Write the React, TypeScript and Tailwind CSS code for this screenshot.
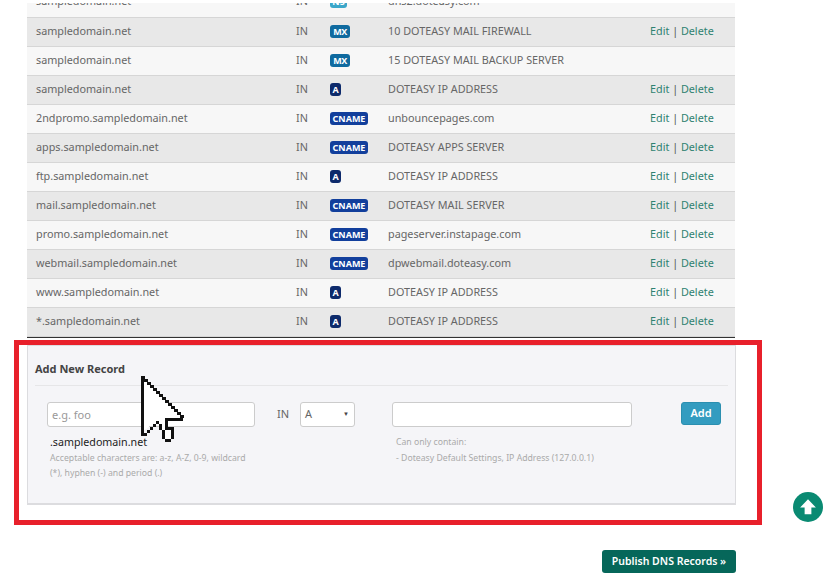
const font = "font-['Noto_Sans','Open_Sans',sans-serif]";

type DnsRow = { host: string; type: "NS" | "MX" | "A" | "CNAME"; value: string; actions?: boolean };

const rows: DnsRow[] = [
  { host: "sampledomain.net", type: "MX", value: "10 DOTEASY MAIL FIREWALL", actions: true },
  { host: "sampledomain.net", type: "MX", value: "15 DOTEASY MAIL BACKUP SERVER" },
  { host: "sampledomain.net", type: "A", value: "DOTEASY IP ADDRESS", actions: true },
  { host: "2ndpromo.sampledomain.net", type: "CNAME", value: "unbouncepages.com", actions: true },
  { host: "apps.sampledomain.net", type: "CNAME", value: "DOTEASY APPS SERVER", actions: true },
  { host: "ftp.sampledomain.net", type: "A", value: "DOTEASY IP ADDRESS", actions: true },
  { host: "mail.sampledomain.net", type: "CNAME", value: "DOTEASY MAIL SERVER", actions: true },
  { host: "promo.sampledomain.net", type: "CNAME", value: "pageserver.instapage.com", actions: true },
  { host: "webmail.sampledomain.net", type: "CNAME", value: "dpwebmail.doteasy.com", actions: true },
  { host: "www.sampledomain.net", type: "A", value: "DOTEASY IP ADDRESS", actions: true },
  { host: "*.sampledomain.net", type: "A", value: "DOTEASY IP ADDRESS", actions: true },
];

const Badge = ({ type }: { type: DnsRow["type"] }) => {
  if (type === "MX") {
    return <span className="w-[20px] rounded-[3px] bg-[#0f6a9f] text-center text-[9px] leading-[13px] font-bold tracking-[-0.5px] text-white">MX</span>;
  }
  if (type === "A") {
    return <span className="w-[11px] rounded-[3px] bg-[#0d2a6b] text-center text-[9px] leading-[13px] font-bold text-white">A</span>;
  }
  if (type === "NS") {
    return <span className="w-[17px] rounded-[3px] bg-[#3aa6c9] text-center text-[9px] leading-[13px] font-bold text-white">NS</span>;
  }
  return <span className="w-[38px] rounded-[3px] bg-[#123f9c] text-center text-[9px] leading-[13px] font-bold text-white">CNAME</span>;
};

const Row = ({ row, even }: { row: DnsRow; even: boolean }) => (
  <div
    className={`grid h-[29px] grid-cols-[260px_34px_58px_262px_85px] items-center border-b border-[#d6d6d6] pb-[2px] pl-[9px] text-[10.8px] text-[#666] ${
      even ? "bg-[#e8e8e8]" : "bg-[#f7f7f7]"
    }`}
  >
    <span>{row.host}</span>
    <span>IN</span>
    <span className="flex"><Badge type={row.type} /></span>
    <span>{row.value}</span>
    <span className="text-[#2f8271]">
      {row.actions && (
        <>
          Edit <span className="text-[#555]">|</span> Delete
        </>
      )}
    </span>
  </div>
);

// 3px pixel blocks of the big arrow cursor, from the tip
const cursorPixels: [number, number][] = [
  ...Array.from({ length: 20 }, (_, i): [number, number] => [0, i]),
  ...Array.from({ length: 13 }, (_, i): [number, number] => [i + 1, i + 1]),
  ...[8, 9, 10, 11, 12, 13].map((c): [number, number] => [c, 14]),
  [8, 15], [8, 16], [8, 17], [9, 17], [10, 17], [10, 18], [10, 19], [10, 20],
  [8, 21], [9, 21], [7, 18], [7, 19], [7, 20],
  [6, 16], [6, 17], [5, 15], [4, 16], [3, 17], [2, 18], [1, 19],
];

const BigCursor = () => (
  <svg className="absolute top-[376px] left-[141px]" width="45" height="66" viewBox="0 0 45 66" shapeRendering="crispEdges">
    <path d="M0 0 L42 42 L27 42 L27 51 L33 51 L33 63 L24 63 L21 54 L15 45 L0 57 Z" fill="#fff" />
    {cursorPixels.map(([x, y], i) => (
      <rect key={i} x={x * 3} y={y * 3} width={x === y ? 4 : 3} height="3" fill="#111" />
    ))}
  </svg>
);

const App = () => {
  return (
    <div className={`relative h-[582px] w-[838px] overflow-hidden bg-white pt-[3px] ${font}`}>
      <div className="ml-[27px] w-[708px]">
        <div className="h-[15px] overflow-hidden border-b border-[#d6d6d6] bg-[#f7f7f7]">
          <div className="-mt-[16px] grid h-[29px] grid-cols-[260px_34px_58px_262px_85px] items-center pl-[9px] text-[10.8px] text-[#666]">
            <span>sampledomain.net</span>
            <span>IN</span>
            <span className="flex"><Badge type="NS" /></span>
            <span>dns2.doteasy.com</span>
          </div>
        </div>
        {rows.map((row, idx) => (
          <Row key={idx} row={row} even={idx % 2 === 0} />
        ))}
        <div className="h-px bg-[#333]" />
      </div>

      <div className="mt-[7px] ml-[27px] h-[160px] w-[709px] border border-b-2 border-[#dcdcdf] bg-[#f5f5f8] px-[7px]">
        <h3 className="mt-[14px] h-[26px] border-b border-[#e6e6e8] text-[11px] leading-[17px] font-bold text-[#444]">Add New Record</h3>
        <div className="mt-[16px] flex items-start text-[11px] text-[#666]">
          <div className="ml-[12px] w-[208px]">
            <input
              placeholder="e.g. foo"
              className="h-[25px] w-full rounded-[3px] border border-[#ccc] bg-white px-[4px] text-[11px] placeholder:text-[#999]"
            />
            <p className="mt-[7px] ml-[3px] text-[10.7px] leading-[16px] text-[#222]">.sampledomain.net</p>
            <p className="mt-px ml-[3px] text-[8.7px] leading-[15px] whitespace-nowrap text-[#aaa]">Acceptable characters are: a-z, A-Z, 0-9, wildcard<br />(*), hyphen (-) and period (.)</p>
          </div>
          <span className="ml-[22px] w-[23px] leading-[24px]">IN</span>
          <div className="flex h-[25px] w-[55px] items-center justify-between rounded-[3px] border border-[#ccc] bg-white pr-[5px] pl-[4px]">
            A
            <span className="text-[6px] text-[#444]">▼</span>
          </div>
          <div className="ml-[37px] w-[240px]">
            <div className="h-[25px] rounded-[3px] border border-[#ccc] bg-white" />
            <p className="mt-[8px] ml-[4px] text-[8.7px] leading-[15.5px] whitespace-nowrap text-[#aaa]">Can only contain:<br />- Doteasy Default Settings, IP Address (127.0.0.1)</p>
          </div>
          <button className="ml-[49px] h-[23px] w-[40px] rounded-[3px] border border-[#2b8fb0] bg-[#339cc0] text-[11px] font-semibold text-white">Add</button>
        </div>
      </div>

      <div className="mt-[45px] ml-[602px] flex h-[23px] w-[134px] items-center justify-center rounded-[3px] bg-[#06675a] text-[10.5px] font-semibold text-white">
        Publish DNS Records »
      </div>

      <div className="pointer-events-none absolute top-[340px] left-[14px] h-[185px] w-[748px] border-[5px] border-[#e8202b]" />
      <BigCursor />
      <div className="absolute top-[492px] left-[793px] flex h-[30px] w-[30px] items-center justify-center rounded-full bg-[#0a8a72]">
        <svg width="18" height="18" viewBox="0 0 16 16"><path d="M8 1 L15 8.5 H11 V14.5 H5 V8.5 H1 Z" fill="#fff" /></svg>
      </div>
    </div>
  );
};

export default App;
